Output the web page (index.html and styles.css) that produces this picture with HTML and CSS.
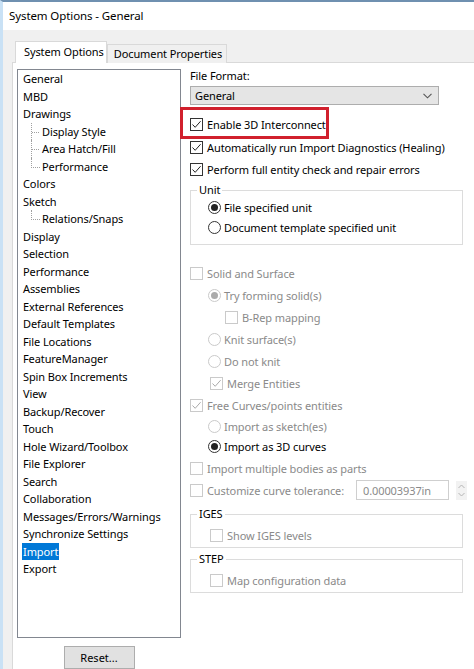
FILE: index.html
```html
<!DOCTYPE html>
<html lang="en">

<head>
    <meta charset="UTF-8">
    <title>System Options - General</title>
    <link rel="stylesheet" href="styles.css">
</head>

<body>
    <div class="window">
        <div class="titlebar">System Options - General</div>

        <div class="dialog">
            <div class="tabs">
                <div class="tab active">System Options</div>
                <div class="tab">Document Properties</div>
            </div>

            <div class="panel">
                <!-- Category tree -->
                <div class="nav-col">
                    <ul class="tree">
                        <li>General</li>
                        <li>MBD</li>
                        <li>Drawings</li>
                        <li class="child"><span class="twig"></span>Display Style</li>
                        <li class="child"><span class="twig"></span>Area Hatch/Fill</li>
                        <li class="child last"><span class="twig"></span>Performance</li>
                        <li>Colors</li>
                        <li>Sketch</li>
                        <li class="child last"><span class="twig"></span>Relations/Snaps</li>
                        <li>Display</li>
                        <li>Selection</li>
                        <li>Performance</li>
                        <li>Assemblies</li>
                        <li>External References</li>
                        <li>Default Templates</li>
                        <li>File Locations</li>
                        <li>FeatureManager</li>
                        <li>Spin Box Increments</li>
                        <li>View</li>
                        <li>Backup/Recover</li>
                        <li>Touch</li>
                        <li>Hole Wizard/Toolbox</li>
                        <li>File Explorer</li>
                        <li>Search</li>
                        <li>Collaboration</li>
                        <li>Messages/Errors/Warnings</li>
                        <li>Synchronize Settings</li>
                        <li><span class="sel">Import</span></li>
                        <li>Export</li>
                    </ul>
                    <button class="reset">Reset...</button>
                </div>

                <!-- Import options -->
                <div class="options">
                    <div class="field-label">File Format:</div>
                    <div class="select">
                        <span>General</span>
                        <svg width="9" height="6" viewBox="0 0 9 6"><path d="M0.5 0.8 L4.5 4.8 L8.5 0.8" fill="none" stroke="#555" stroke-width="1.1"/></svg>
                    </div>

                    <div class="callout"></div>

                    <div class="opt first">
                        <span class="box"><svg viewBox="0 0 11 11"><path d="M1.5 5.5 L4.2 8.3 L9.6 2.2" fill="none" stroke="#222" stroke-width="1"/></svg></span>
                        Enable 3D Interconnect
                    </div>
                    <div class="opt tight">
                        <span class="box"><svg viewBox="0 0 11 11"><path d="M1.5 5.5 L4.2 8.3 L9.6 2.2" fill="none" stroke="#222" stroke-width="1"/></svg></span>
                        Automatically run Import Diagnostics (Healing)
                    </div>
                    <div class="opt">
                        <span class="box"><svg viewBox="0 0 11 11"><path d="M1.5 5.5 L4.2 8.3 L9.6 2.2" fill="none" stroke="#222" stroke-width="1"/></svg></span>
                        Perform full entity check and repair errors
                    </div>

                    <fieldset class="group unit">
                        <legend>Unit</legend>
                        <div class="group-body">
                            <div class="opt row20"><span class="radio on"></span>File specified unit</div>
                            <div class="opt row20"><span class="radio"></span>Document template specified unit</div>
                        </div>
                    </fieldset>

                    <div class="opt off solid">
                        <span class="box"></span>Solid and Surface
                    </div>
                    <div class="opt off sub"><span class="radio on"></span>Try forming solid(s)</div>
                    <div class="opt off sub2"><span class="box"></span>B-Rep mapping</div>
                    <div class="opt off sub"><span class="radio"></span>Knit surface(s)</div>
                    <div class="opt off sub"><span class="radio"></span>Do not knit</div>
                    <div class="opt off subbox">
                        <span class="box"><svg viewBox="0 0 11 11"><path d="M1.5 5.5 L4.2 8.3 L9.6 2.2" fill="none" stroke="#aaa" stroke-width="1"/></svg></span>
                        Merge Entities
                    </div>
                    <div class="opt off">
                        <span class="box"><svg viewBox="0 0 11 11"><path d="M1.5 5.5 L4.2 8.3 L9.6 2.2" fill="none" stroke="#aaa" stroke-width="1"/></svg></span>
                        Free Curves/points entities
                    </div>
                    <div class="opt off sub row20"><span class="radio"></span>Import as sketch(es)</div>
                    <div class="opt sub row20"><span class="radio on"></span>Import as 3D curves</div>
                    <div class="opt off tight"><span class="box"></span>Import multiple bodies as parts</div>
                    <div class="opt off tol">
                        <span class="box"></span>
                        <span class="tol-label">Customize curve tolerance:</span>
                        <span class="tol-input">0.00003937in</span>
                        <span class="spin">
                            <svg width="11" height="19" viewBox="0 0 11 19"><path d="M2.5 7 L5.5 4 L8.5 7 M2.5 12 L5.5 15 L8.5 12" fill="none" stroke="#b5b5b5" stroke-width="1"/></svg>
                        </span>
                    </div>

                    <fieldset class="group iges">
                        <legend>IGES</legend>
                        <div class="group-body">
                            <div class="opt off row20 inbox"><span class="box"></span>Show IGES levels</div>
                        </div>
                    </fieldset>

                    <fieldset class="group step">
                        <legend>STEP</legend>
                        <div class="group-body">
                            <div class="opt off row20 inbox"><span class="box"></span>Map configuration data</div>
                        </div>
                    </fieldset>
                </div>
            </div>
        </div>
    </div>
</body>

</html>
```

FILE: styles.css
```css
/* Window frame */
body {
    margin: 0;
    font-family: 'Noto Sans', 'Open Sans', sans-serif;
    font-size: 11px;
    letter-spacing: -0.1px;
    color: #000;
    background: #fff;
}

.window {
    height: 669px;
    box-sizing: border-box;
    border-top: 2px solid #6f90b0;
    border-left: 3px solid #c9e1f5;
    display: flex;
    flex-direction: column;
    overflow: hidden;
}

.titlebar {
    height: 28px;
    line-height: 28px;
    padding-left: 6px;
    font-size: 11.5px;
    background: #fff;
    white-space: nowrap;
}

.dialog {
    flex: 1;
    background: #f0f0f0;
    padding: 12px 0 0 9px;
    display: flex;
    flex-direction: column;
    min-height: 0;
}

/* Tabs */
.tabs {
    display: flex;
    align-items: flex-end;
    margin-left: 3px;
    height: 21px;
    margin-bottom: -1px;
    position: relative;
    z-index: 1;
}

.tab {
    height: 18px;
    line-height: 18px;
    padding: 0 4px 0 6px;
    background: #f0f0f0;
    border: 1px solid #d9d9d9;
    border-bottom: none;
    white-space: nowrap;
}

.tab.active {
    height: 21px;
    line-height: 20px;
    padding: 0 2px 0 8px;
    background: #fff;
}

.panel {
    flex: 1;
    min-height: 0;
    background: #fff;
    border: 1px solid #d9d9d9;
    border-right: none;
    border-bottom: none;
    display: flex;
    gap: 9px;
    padding: 6px 0 0 4px;
}

/* Category tree */
.nav-col {
    width: 164px;
    flex: none;
    display: flex;
    flex-direction: column;
    align-items: center;
}

.tree {
    list-style: none;
    margin: 0;
    padding: 0 0 0 5px;
    width: 100%;
    height: 574px;
    box-sizing: border-box;
    border: 1px solid #828790;
}

.tree li {
    height: 17.5px;
    line-height: 17.5px;
    white-space: nowrap;
}

.tree .child {
    padding-left: 8px;
}

.twig {
    display: inline-block;
    vertical-align: top;
    width: 8px;
    height: 17.5px;
    margin-right: 2px;
    border-left: 1px dotted #a0a0a0;
    background: linear-gradient(90deg, #a0a0a0 50%, transparent 0) 0 9px / 2px 1px repeat-x;
}

.tree .last .twig {
    height: 9px;
    background: none;
    border-bottom: 1px dotted #a0a0a0;
}

.sel {
    background: #0078d7;
    color: #fff;
    padding: 1px 1px;
    margin-left: -1px;
}

.reset {
    margin-top: 8px;
    width: 71px;
    height: 23px;
    padding: 0;
    font: inherit;
    color: #000;
    background: #e1e1e1;
    border: 1px solid #adadad;
}

/* Options column */
.options {
    flex: 1;
    position: relative;
}

.field-label {
    height: 14px;
    line-height: 14px;
}

.select {
    width: 249px;
    height: 19px;
    box-sizing: border-box;
    margin-top: 3px;
    padding: 0 6px 0 4px;
    background: #e5e5e5;
    border: 1px solid #adadad;
    display: flex;
    align-items: center;
    justify-content: space-between;
}

.callout {
    position: absolute;
    left: -10px;
    top: 38px;
    width: 149px;
    height: 32px;
    box-sizing: border-box;
    border: 3px solid #d1202d;
}

.opt {
    display: flex;
    align-items: center;
    gap: 4px;
    height: 22px;
    white-space: nowrap;
}

.opt.first {
    margin-top: 8px;
}

.opt.tight {
    margin-top: 1px;
}

.opt.row20 {
    height: 20px;
}

.opt.sub {
    padding-left: 18px;
    gap: 3px;
}

.opt.sub2 {
    padding-left: 35px;
}

.opt.subbox {
    padding-left: 20px;
}

.opt.solid {
    margin-top: 17px;
}

.off {
    color: #8a8a8a;
}

.box,
.radio {
    width: 13px;
    height: 13px;
    box-sizing: border-box;
    flex: none;
    border: 1px solid #333;
    background: #fff;
    display: flex;
    align-items: center;
    justify-content: center;
}

.box svg {
    width: 11px;
    height: 11px;
}

.radio {
    border-radius: 50%;
}

.radio.on::after {
    content: '';
    width: 7px;
    height: 7px;
    border-radius: 50%;
    background: #222;
}

.off .box,
.off .radio {
    border-color: #cacaca;
}

.off .radio.on::after {
    background: #ababab;
}

/* Curve tolerance */
.tol-label {
    width: 149px;
}

.tol-input {
    width: 93px;
    height: 20px;
    line-height: 20px;
    box-sizing: border-box;
    padding-left: 6px;
    border: 1px solid #cfcfcf;
    margin-left: -4px;
}

.spin {
    display: flex;
    margin-left: 3px;
    background: #f2f2f2;
}

/* Group boxes */
.group {
    margin: 0;
    padding: 0;
    width: 273px;
    box-sizing: border-box;
    border: 1px solid #dcdcdc;
    min-inline-size: 0;
}

.group legend {
    margin-left: 6px;
    padding: 0 2px;
    line-height: 14px;
    color: #000;
}

.unit {
    margin-top: 3px;
}

.unit .group-body {
    padding: 0 0 7px 17px;
}

.unit .opt {
    gap: 3px;
}

.iges {
    margin-top: 6px;
}

.step {
    margin-top: 4px;
}

.iges .group-body,
.step .group-body {
    padding: 4px 0 2px 19px;
}
```
